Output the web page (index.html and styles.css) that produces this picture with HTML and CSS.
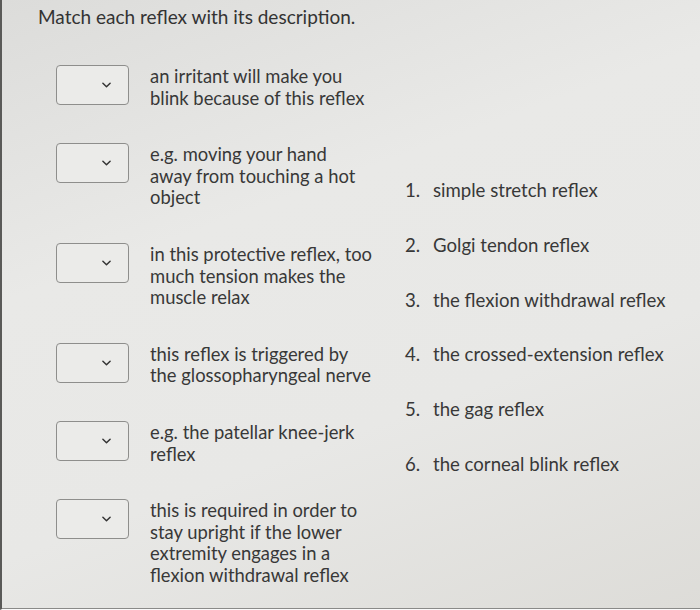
FILE: index.html
```html
<!DOCTYPE html>
<html lang="en">
<head>
<meta charset="utf-8">
<link rel="stylesheet" href="styles.css">
</head>
<body>
<div class="screen">
  <h1 class="title">Match each reflex with its description.</h1>
  <div class="content">
    <div class="matches">
      <div class="row">
        <div class="select"><svg class="chev" viewBox="0 0 10 6" width="9" height="6"><path d="M1 1 L5 5 L9 1" fill="none" stroke="#333" stroke-width="1.6" stroke-linecap="round" stroke-linejoin="round"/></svg></div>
        <p class="desc">an irritant will make you<br>blink because of this reflex</p>
      </div>
      <div class="row">
        <div class="select"><svg class="chev" viewBox="0 0 10 6" width="9" height="6"><path d="M1 1 L5 5 L9 1" fill="none" stroke="#333" stroke-width="1.6" stroke-linecap="round" stroke-linejoin="round"/></svg></div>
        <p class="desc">e.g. moving your hand<br>away from touching a hot<br>object</p>
      </div>
      <div class="row">
        <div class="select"><svg class="chev" viewBox="0 0 10 6" width="9" height="6"><path d="M1 1 L5 5 L9 1" fill="none" stroke="#333" stroke-width="1.6" stroke-linecap="round" stroke-linejoin="round"/></svg></div>
        <p class="desc">in this protective reflex, too<br>much tension makes the<br>muscle relax</p>
      </div>
      <div class="row">
        <div class="select"><svg class="chev" viewBox="0 0 10 6" width="9" height="6"><path d="M1 1 L5 5 L9 1" fill="none" stroke="#333" stroke-width="1.6" stroke-linecap="round" stroke-linejoin="round"/></svg></div>
        <p class="desc">this reflex is triggered by<br>the glossopharyngeal nerve</p>
      </div>
      <div class="row">
        <div class="select"><svg class="chev" viewBox="0 0 10 6" width="9" height="6"><path d="M1 1 L5 5 L9 1" fill="none" stroke="#333" stroke-width="1.6" stroke-linecap="round" stroke-linejoin="round"/></svg></div>
        <p class="desc">e.g. the patellar knee-jerk<br>reflex</p>
      </div>
      <div class="row">
        <div class="select"><svg class="chev" viewBox="0 0 10 6" width="9" height="6"><path d="M1 1 L5 5 L9 1" fill="none" stroke="#333" stroke-width="1.6" stroke-linecap="round" stroke-linejoin="round"/></svg></div>
        <p class="desc">this is required in order to<br>stay upright if the lower<br>extremity engages in a<br>flexion withdrawal reflex</p>
      </div>
    </div>
    <ol class="choices">
      <li><span class="num">1.</span><span>simple stretch reflex</span></li>
      <li><span class="num">2.</span><span>Golgi tendon reflex</span></li>
      <li><span class="num">3.</span><span>the flexion withdrawal reflex</span></li>
      <li><span class="num">4.</span><span>the crossed-extension reflex</span></li>
      <li><span class="num">5.</span><span>the gag reflex</span></li>
      <li><span class="num">6.</span><span>the corneal blink reflex</span></li>
    </ol>
  </div>
</div>
</body>
</html>
```

FILE: styles.css
```css
html, body {
  margin: 0;
  padding: 0;
}
body {
  width: 700px;
  height: 610px;
  overflow: hidden;
  font-family: Lato, "Open Sans", sans-serif;
  color: #383838;
}
.screen {
  box-sizing: border-box;
  width: 700px;
  height: 610px;
  border-left: 2px solid #5a5a58;
  border-bottom: 1px solid #fafafa;
  box-shadow: inset 0 -1px 0 #8a8a88;
  background: linear-gradient(160deg, #dcdcda 0%, #e9e9e7 35%, #e8e8e6 65%, #dddcd8 100%);
  padding: 4px 0 0 36px;
}
.title {
  margin: 0;
  font-size: 19px;
  font-weight: 400;
  line-height: 26px;
  color: #333;
}
.content {
  display: flex;
  margin-top: 35px;
}
.matches {
  display: flex;
  flex-direction: column;
  gap: 34px;
  width: 367px;
}
.row {
  display: flex;
  align-items: flex-start;
  padding-left: 18px;
  gap: 21px;
}
.select {
  box-sizing: border-box;
  flex: none;
  width: 73px;
  height: 40px;
  border: 1.5px solid #8e8e8c;
  border-radius: 4px;
  background: #ebebe9;
  display: flex;
  align-items: center;
  justify-content: flex-end;
  padding-right: 17px;
}
.chev {
  display: block;
}
.desc {
  margin: 0;
  font-size: 18.4px;
  line-height: 21.6px;
  padding-top: 1px;
  white-space: nowrap;
}
.choices {
  list-style: none;
  margin: 115px 0 0 0;
  padding: 0;
  display: flex;
  flex-direction: column;
  gap: 33.3px;
}
.choices li {
  display: flex;
  font-size: 18.6px;
  line-height: 21.5px;
}
.num {
  width: 28px;
  flex: none;
}
```
